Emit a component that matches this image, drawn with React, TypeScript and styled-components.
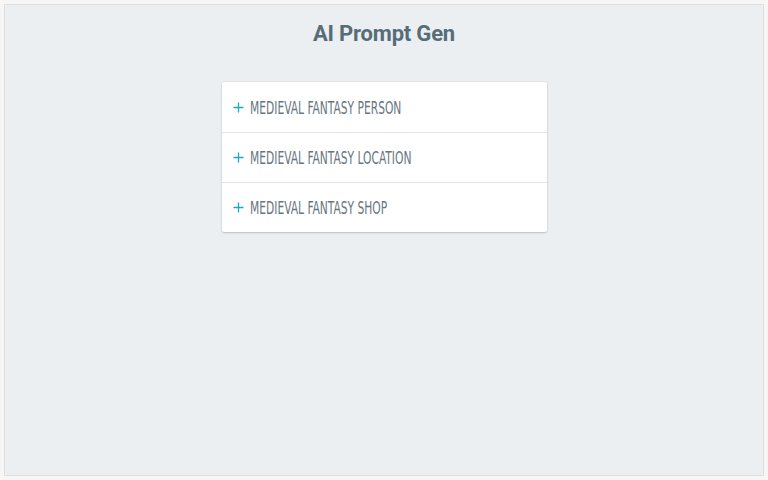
import React from "react";
import styled, { createGlobalStyle } from "styled-components";

const Global = createGlobalStyle`
  html, body { margin: 0; padding: 0; background: #f6f6f6; }
  body { font-family: Roboto, "Liberation Sans", sans-serif; }
`;

const Frame = styled.div`
  box-sizing: border-box;
  margin: 4px;
  height: 472px;
  background: #ebeff2;
  border: 1px solid #dcdee0;
  display: flex;
  flex-direction: column;
  align-items: center;
`;

const Title = styled.h1`
  margin: 0;
  padding-top: 13px;
  height: 32px;
  line-height: 32px;
  font-family: Roboto, "Liberation Sans", sans-serif;
  font-weight: 700;
  font-size: 22px;
  color: #566d78;
  letter-spacing: -0.2px;
`;

const Card = styled.ul`
  list-style: none;
  margin: 32px 0 0 1px;
  padding: 0;
  width: 325px;
  background: #fff;
  border-radius: 2px;
  box-shadow: 0 1px 2px rgba(0, 0, 0, 0.16), 0 0 0 1px rgba(0, 0, 0, 0.03);
`;

const Row = styled.li<{ $first?: boolean }>`
  display: flex;
  align-items: center;
  height: 50px;
  box-sizing: border-box;
  padding-left: 11px;
  border-top: 1px solid ${(p) => (p.$first ? "transparent" : "#e3e6e8")};
`;

const Plus = styled.span`
  width: 11px;
  height: 11px;
  margin-right: 6px;
  display: flex;
  color: #1fa8b8;
`;

const Label = styled.span`
  font-family: "DejaVu Sans Condensed", "DejaVu Sans", sans-serif;
  font-stretch: condensed;
  font-weight: 400;
  font-size: 17.5px;
  color: #67767f;
  transform: scaleX(0.68);
  transform-origin: left center;
  white-space: nowrap;
`;

const items = ["MEDIEVAL FANTASY PERSON", "MEDIEVAL FANTASY LOCATION", "MEDIEVAL FANTASY SHOP"];

export default function App() {
  return (
    <>
      <Global />
      <Frame>
        <Title>AI Prompt Gen</Title>
        <Card>
          {items.map((t, i) => (
            <Row key={t} $first={i === 0}>
              <Plus>
                <svg width="11" height="11" viewBox="0 0 11 11">
                  <path d="M5.5 0.5v10M0.5 5.5h10" stroke="currentColor" strokeWidth="1.3" fill="none" />
                </svg>
              </Plus>
              <Label>{t}</Label>
            </Row>
          ))}
        </Card>
      </Frame>
    </>
  );
}
